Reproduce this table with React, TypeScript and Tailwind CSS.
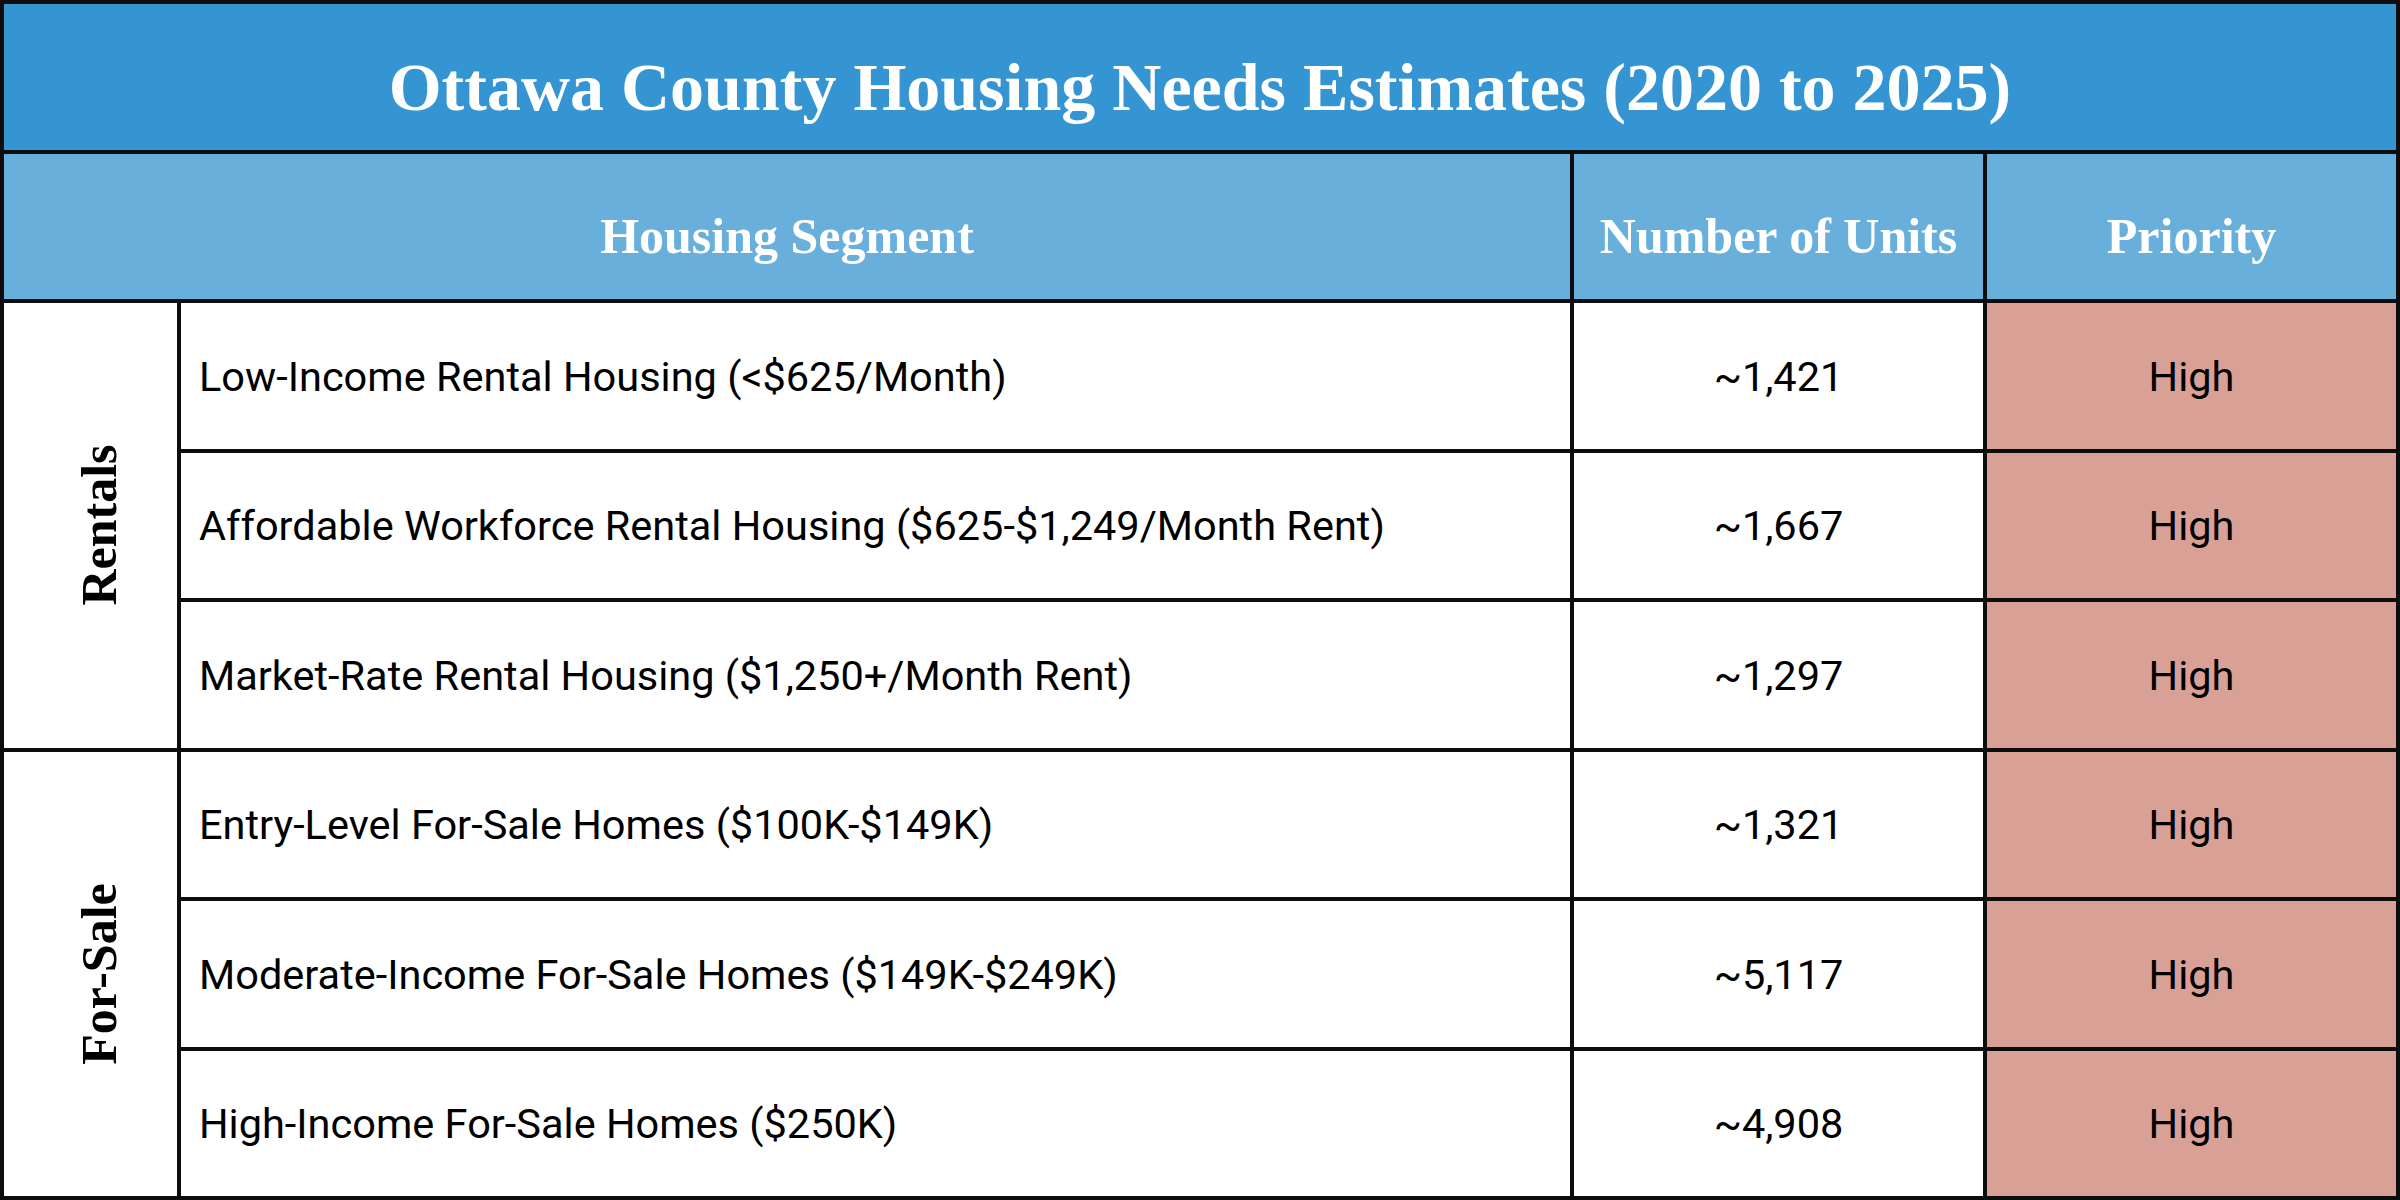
import React from 'react';

interface Row {
  segment: string;
  units: string;
  priority: string;
}

const rentals: Row[] = [
  { segment: 'Low-Income Rental Housing (<$625/Month)', units: '~1,421', priority: 'High' },
  { segment: 'Affordable Workforce Rental Housing ($625-$1,249/Month Rent)', units: '~1,667', priority: 'High' },
  { segment: 'Market-Rate Rental Housing ($1,250+/Month Rent)', units: '~1,297', priority: 'High' },
];

const forSale: Row[] = [
  { segment: 'Entry-Level For-Sale Homes ($100K-$149K)', units: '~1,321', priority: 'High' },
  { segment: 'Moderate-Income For-Sale Homes ($149K-$249K)', units: '~5,117', priority: 'High' },
  { segment: 'High-Income For-Sale Homes ($250K)', units: '~4,908', priority: 'High' },
];

const serif = "font-['Liberation_Serif','Times_New_Roman',serif]";
const sans = "font-['Roboto','Liberation_Sans',sans-serif]";

const GroupLabel: React.FC<{ label: string; rowClass: string }> = ({ label, rowClass }) => (
  <div className={`${rowClass} col-start-1 bg-white flex items-center justify-center pl-[16px]`}>
    <span className={`${serif} -rotate-90 whitespace-nowrap text-[50px] font-bold text-black leading-none`}>{label}</span>
  </div>
);

const DataRow: React.FC<{ row: Row }> = ({ row }) => (
  <>
    <div className={`${sans} col-start-2 bg-white flex items-center pl-[18px] pt-[2px] text-[41.5px] text-black`}>{row.segment}</div>
    <div className={`${sans} bg-white flex items-center justify-center pt-[2px] text-[41.5px] text-black`}>{row.units}</div>
    <div className={`${sans} bg-[#d9a196] flex items-center justify-center pt-[2px] text-[41.5px] text-black`}>{row.priority}</div>
  </>
);

const App: React.FC = () => {
  return (
    <div className="w-[2400px] h-[1200px] bg-[#0d0d0d] p-[4px] grid grid-cols-[173px_1389px_409px_409px] grid-rows-8 gap-[4px]">
      <div className={`${serif} col-span-4 bg-[#3595d3] flex items-center justify-center pt-[20px] text-[68px] font-bold text-white`}>
        Ottawa County Housing Needs Estimates (2020 to 2025)
      </div>
      <div className={`${serif} col-span-2 bg-[#68afdc] flex items-center justify-center pt-[20px] text-[50px] font-bold text-white`}>
        Housing Segment
      </div>
      <div className={`${serif} bg-[#68afdc] flex items-center justify-center pt-[20px] text-[50px] font-bold text-white`}>
        Number of Units
      </div>
      <div className={`${serif} bg-[#68afdc] flex items-center justify-center pt-[20px] text-[50px] font-bold text-white`}>
        Priority
      </div>

      <GroupLabel label="Rentals" rowClass="row-start-3 row-span-3" />
      {rentals.map(r => <DataRow key={r.segment} row={r} />)}

      <GroupLabel label="For-Sale" rowClass="row-start-6 row-span-3" />
      {forSale.map(r => <DataRow key={r.segment} row={r} />)}
    </div>
  );
};

export default App;
